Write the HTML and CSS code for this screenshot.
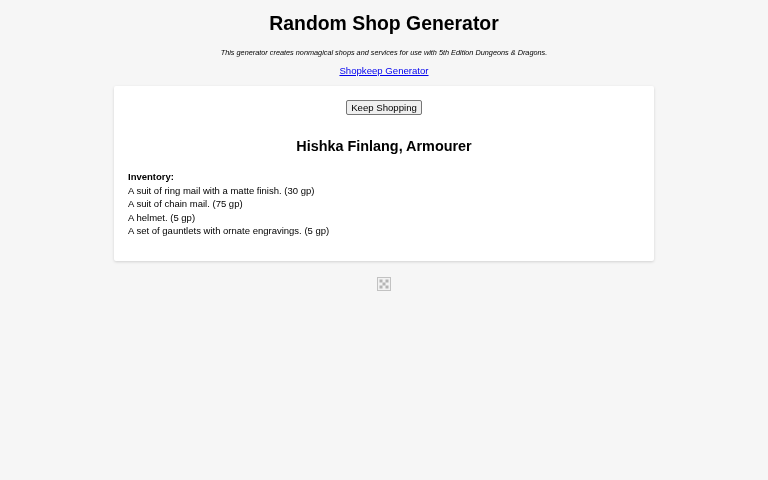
FILE: index.html
```html
<!DOCTYPE html>
<html lang="en">
<head>
  <meta charset="UTF-8" />
  <title>Random Shop Generator</title>
  <link rel="stylesheet" href="styles.css">
</head>
<body>
  <div class="page">
    <header class="page-head">
      <h1>Random Shop Generator</h1>
      <p class="intro">This generator creates nonmagical shops and services for use with 5th Edition Dungeons &amp; Dragons.</p>
      <a class="head-link" href="#">Shopkeep Generator</a>
    </header>

    <div class="container">
      <div class="button-row">
        <button>Keep Shopping</button>
      </div>
      <h2>Hishka Finlang, Armourer</h2>
      <div class="inventory">
        <strong>Inventory:</strong><br>
        A suit of ring mail with a matte finish. (30 gp)<br>
        A suit of chain mail. (75 gp)<br>
        A helmet. (5 gp)<br>
        A set of gauntlets with ornate engravings. (5 gp)
      </div>
    </div>

    <footer>
      <svg class="dice" width="14" height="14" viewBox="0 0 14 14">
        <rect x="0.5" y="0.5" width="13" height="13" fill="#f2f2f2" stroke="#c2c2c2"/>
        <rect x="2.5" y="2.5" width="3" height="3" fill="#b4b4b4"/>
        <rect x="8.5" y="2.5" width="3" height="3" fill="#b4b4b4"/>
        <rect x="5.5" y="5.5" width="3" height="3" fill="#b4b4b4"/>
        <rect x="2.5" y="8.5" width="3" height="3" fill="#b4b4b4"/>
        <rect x="8.5" y="8.5" width="3" height="3" fill="#b4b4b4"/>
      </svg>
    </footer>
  </div>
</body>
</html>
```

FILE: styles.css
```css
* {
  margin: 0;
  padding: 0;
  box-sizing: border-box;
}

body {
  font-family: "Liberation Sans", Arial, sans-serif;
  background-color: #f6f6f6;
  color: #000;
  font-size: 9.6px;
}

/* the reference is a slightly soft, greyscale capture */
.page {
  min-height: 480px;
  filter: blur(0.3px);
}

.page-head {
  text-align: center;
  padding-top: 12px;
}

h1 {
  font-size: 19.4px;
  line-height: 22px;
  margin-bottom: 14px;
}

.intro {
  font-size: 7.3px;
  font-style: italic;
  line-height: 9px;
  margin-bottom: 8px;
}

.head-link {
  display: block;
  font-size: 9.6px;
  line-height: 11px;
  color: #0000ee;
  text-decoration: underline;
}

.container {
  width: 540px;
  margin: 10px auto 0;
  height: 175px;
  padding: 14px 14px 0;
  background-color: #fff;
  border-radius: 2px;
  box-shadow: 0 1px 3px rgba(0, 0, 0, 0.15);
}

.button-row {
  text-align: center;
}

button {
  font-family: "Liberation Sans", Arial, sans-serif;
  font-size: 9.6px;
  padding: 1px 4.5px;
  height: 15px;
  background-color: #efefef;
  border: 1px solid #767676;
  border-radius: 2px;
  color: #000;
}

h2 {
  font-size: 14.4px;
  line-height: 17px;
  text-align: center;
  margin-top: 23px;
  margin-bottom: 15.3px;
}

.inventory {
  font-size: 9.5px;
  line-height: 13.44px;
}

footer {
  display: flex;
  justify-content: center;
  margin-top: 16px;
}
```
